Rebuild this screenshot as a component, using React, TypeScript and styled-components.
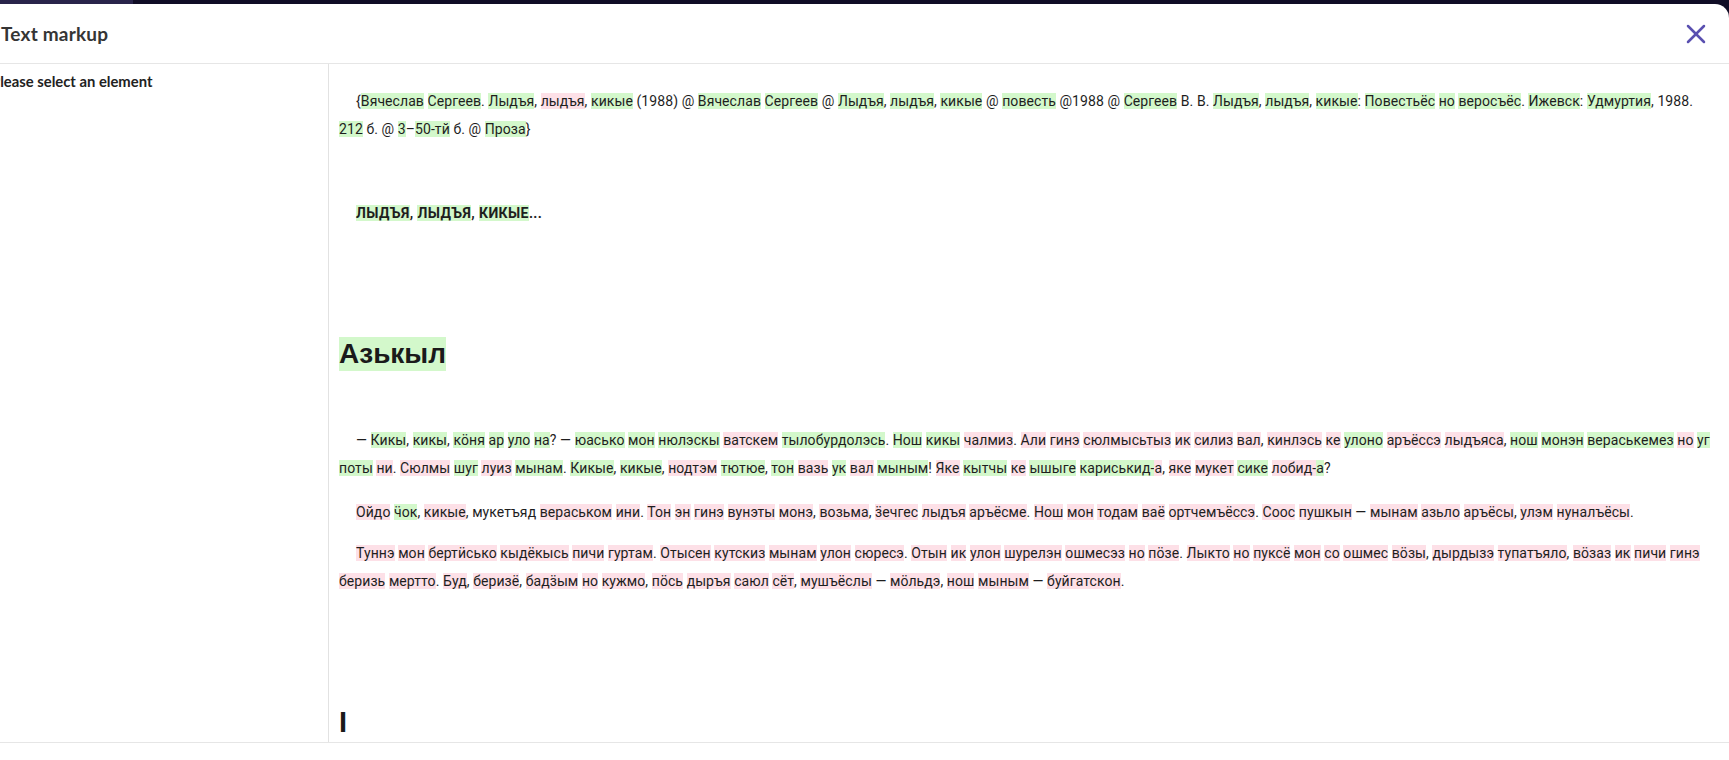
import React from "react";
import styled, { createGlobalStyle } from "styled-components";
import { X } from "lucide-react";

type Tone = "ok" | "bad";

// ^word = recognised (green), ~word = unknown (pink)
const P1 =
  "{^Вячеслав ^Сергеев. ^Лыдъя, ~лыдъя, ^кикые (1988) @ ^Вячеслав ^Сергеев @ ^Лыдъя, ^лыдъя, ^кикые @ ^повесть @1988 @ ^Сергеев В. В. ^Лыдъя, ^лыдъя, ^кикые: ^Повестьёс ^но ^веросъёс. ^Ижевск: ^Удмуртия, 1988. ^212\u00a0б. @ ^3–^50-тй\u00a0б. @ ^Проза}";
const LEAD = "^ЛЫДЪЯ, ^ЛЫДЪЯ, ^КИКЫЕ...";
const P2 =
  "— ^Кикы, ^кикы, ^кӧня ^ар ^уло ^на? — ^юасько ^мон ^нюлэскы ~ватскем ^тылобурдолэсь. ^Нош ^кикы ~чалмиз. ~Али ~гинэ ~сюлмысьтыз ~ик ~силиз ~вал, ~кинлэсь ~ке ^улоно ~аръёссэ ~лыдъяса, ^нош ^монэн ^вераськемез ~но ^уг ^поты ~ни. ~Сюлмы ^шуг ~луиз ^мынам. ^Кикые, ^кикые, ~нодтэм ^тютюе, ^тон ~вазь ^ук ~вал ^мыным! ~Яке ^кытчы ~ке ^ышыге ^кариськид-~а, ~яке ~мукет ^сике ~лобид-^а?";
const P3 =
  "~Ойдо ^ӵок, ~кикые, мукетъяд ~вераськом ~ини. ~Тон ~эн ~гинэ ~вунэты ~монэ, ~возьма, ~ӟечгес ~лыдъя ~аръёсме. ~Нош ~мон ~тодам ~ваё ~ортчемъёссэ. ~Соос ~пушкын — ~мынам ~азьло ~аръёсы, ~улэм ~нуналъёсы.";
const P4 =
  "~Туннэ ~мон ~бертӥсько ~кыдёкысь ~пичи ~гуртам. ~Отысен ~кутскиз ~мынам ~улон ~сюресэ. ~Отын ~ик ~улон ~шурелэн ~ошмесэз ~но ~пӧзе. ~Лыкто ~но ~пуксё ~мон ~со ~ошмес ~вӧзы, ~дырдызэ ~тупатъяло, ~вӧзаз ~ик ~пичи ~гинэ ~беризь ~мертто. ~Буд, ~беризё, ~бадӟым ~но ~кужмо, ~пӧсь ~дыръя ~саюл ~сёт, ~мушъёслы — ~мӧльдэ, ~нош ~мыным — ~буйгатскон.";

function markup(src: string) {
  const out: React.ReactNode[] = [];
  const re = /([\^~])([\p{L}\p{N}-]+)/gu;
  let last = 0;
  let m: RegExpExecArray | null;
  let i = 0;
  while ((m = re.exec(src))) {
    if (m.index > last) out.push(src.slice(last, m.index));
    out.push(
      <Mark key={i++} $tone={m[1] === "^" ? "ok" : "bad"}>
        {m[2]}
      </Mark>
    );
    last = re.lastIndex;
  }
  if (last < src.length) out.push(src.slice(last));
  return out;
}

export default function App() {
  return (
    <>
      <GlobalStyle />
      <Modal>
        <Header>
          <h1>Text markup</h1>
          <CloseButton aria-label="Close">
            <X size={32} strokeWidth={1.9} />
          </CloseButton>
        </Header>
        <Body>
          <Sidebar>
            <p>Please select an element</p>
          </Sidebar>
          <Viewer>
            <Doc>
              <Para $top={23}>{markup(P1)}</Para>
              <Para $top={56} $bold>
                {markup(LEAD)}
              </Para>
              <Heading $top={110}>
                <Mark $tone="ok">Азькыл</Mark>
              </Heading>
              <Para $top={55}>{markup(P2)}</Para>
              <Para $top={16}>{markup(P3)}</Para>
              <Para $top={13}>{markup(P4)}</Para>
              <Chapter>I</Chapter>
            </Doc>
          </Viewer>
        </Body>
      </Modal>
    </>
  );
}

const GlobalStyle = createGlobalStyle`
  html, body {
    margin: 0;
    height: 100%;
    overflow: hidden;
  }
  body {
    background: linear-gradient(to right, #29244a 0 133px, #100d26 133px);
  }
`;

const Modal = styled.div`
  margin-top: 4px;
  height: 756px;
  background: #fff;
  border-top-right-radius: 14px;
  display: flex;
  flex-direction: column;
  overflow: hidden;
`;

const Header = styled.header`
  height: 59px;
  flex: none;
  display: flex;
  align-items: center;
  justify-content: space-between;
  padding: 0 17px 0 1px;
  border-bottom: 1px solid #e6e6e6;

  h1 {
    margin: 0;
    font: 700 19px "Lato", "Noto Sans", sans-serif;
    letter-spacing: 0.2px;
    color: #353535;
  }
`;

const CloseButton = styled.button`
  display: flex;
  padding: 0;
  border: 0;
  background: none;
  color: #5a50b0;
  cursor: pointer;
`;

const Body = styled.div`
  height: 678px;
  flex: none;
  display: grid;
  grid-template-columns: 329px 1fr;
  border-bottom: 1px solid #e6e6e6;
`;

const Sidebar = styled.aside`
  border-right: 1px solid #e2e2e2;
  padding-top: 8px;

  p {
    margin: 0 0 0 -9px;
    font: 700 14.8px/18px "Lato", "Noto Sans", sans-serif;
    color: #222;
  }
`;

const Viewer = styled.div`
  overflow-y: auto;
  min-height: 0;

  &::-webkit-scrollbar {
    width: 4px;
  }
  &::-webkit-scrollbar-track {
    background: #fafafa;
    margin-top: 3px;
  }
  &::-webkit-scrollbar-thumb {
    background: #7d7d7d;
    border-radius: 2px;
  }
`;

const Doc = styled.article`
  padding: 0 4px 0 10px;
  min-height: 13500px;
  font-family: "Roboto", "Noto Sans", sans-serif;
  font-size: 14px;
  letter-spacing: 0.08px;
  color: #1e1e1e;
  display: flow-root;
`;

const Mark = styled.span<{ $tone: Tone }>`
  background: ${(p) => (p.$tone === "ok" ? "#d3f8cb" : "#fde0e7")};
`;

const Para = styled.p<{ $top: number; $bold?: boolean }>`
  margin: ${(p) => p.$top}px 0 0;
  text-indent: 17px;
  line-height: 28px;
  font-weight: ${(p) => (p.$bold ? 700 : 400)};
  letter-spacing: ${(p) => (p.$bold ? "0.4px" : "inherit")};
`;

const Heading = styled.h2<{ $top: number }>`
  margin: ${(p) => p.$top}px 0 0;
  font: 700 28px/34px "Liberation Sans", Arial, sans-serif;
  letter-spacing: 0;
  color: #1a1a1a;

  ${Mark} {
    display: inline-block;
  }
`;

const Chapter = styled.h1`
  margin: 110px 0 0;
  font: 700 29px/35px "Liberation Sans", Arial, sans-serif;
  letter-spacing: 0;
  color: #1a1a1a;
`;
